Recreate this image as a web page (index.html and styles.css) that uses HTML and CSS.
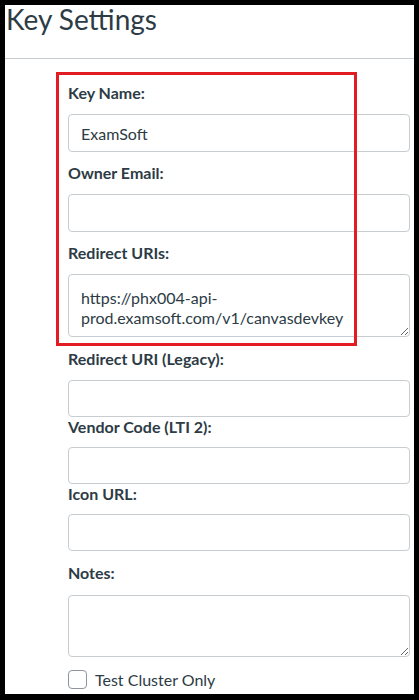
FILE: index.html
```html
<!DOCTYPE html>
<html lang="en">
<head>
<meta charset="utf-8">
<title>Key Settings</title>
<link rel="stylesheet" href="styles.css">
</head>
<body>
<div class="frame">
  <div class="page">
    <header class="page-header">
      <h1 class="page-title">Key Settings</h1>
    </header>
    <form class="key-form">
      <div class="field">
        <label class="field-label" for="key-name">Key Name:</label>
        <input class="text-input" id="key-name" type="text" value="ExamSoft">
      </div>
      <div class="field">
        <label class="field-label" for="owner-email">Owner Email:</label>
        <input class="text-input" id="owner-email" type="text" value="">
      </div>
      <div class="field field--gap12">
        <label class="field-label" for="redirect-uris">Redirect URIs:</label>
        <textarea class="text-area text-area--uris" id="redirect-uris">https://phx004-api-prod.examsoft.com/v1/canvasdevkey</textarea>
      </div>
      <div class="field field--tight">
        <label class="field-label" for="redirect-legacy">Redirect URI (Legacy):</label>
        <input class="text-input text-input--short" id="redirect-legacy" type="text" value="">
      </div>
      <div class="field field--tight">
        <label class="field-label field-label--m10" for="vendor-code">Vendor Code (LTI 2):</label>
        <input class="text-input text-input--short" id="vendor-code" type="text" value="">
      </div>
      <div class="field field--gap12">
        <label class="field-label field-label--m10" for="icon-url">Icon URL:</label>
        <input class="text-input text-input--short" id="icon-url" type="text" value="">
      </div>
      <div class="field field--gap13">
        <label class="field-label field-label--m12" for="notes">Notes:</label>
        <textarea class="text-area text-area--notes" id="notes"></textarea>
      </div>
      <label class="check-row">
        <input class="check-box" type="checkbox">
        <span class="check-text">Test Cluster Only</span>
      </label>
    </form>
  </div>
  <div class="highlight-box"></div>
</div>
</body>
</html>
```

FILE: styles.css
```css
html, body {
  margin: 0;
  padding: 0;
  height: 700px;
  overflow: hidden;
  background: #000;
}

.frame {
  position: relative;
  padding: 5px 5px 6px 5px;
  height: 700px;
  box-sizing: border-box;
}

.page {
  background: #fff;
  height: 689px;
  font-family: Lato, "Open Sans", sans-serif;
  color: #2d3b45;
}

.page-header {
  padding: 0 0 25px 1px;
  border-bottom: 1px solid #c7cdd1;
}

.page-title {
  margin: 0;
  font-size: 28px;
  line-height: 28px;
  font-weight: 400;
  color: #2d3b45;
}

.key-form {
  padding: 24px 4px 0 63px;
}

.field {
  display: flex;
  flex-direction: column;
  margin-bottom: 11px;
}

.field--tight { margin-bottom: 0; }
.field--gap12 { margin-bottom: 12px; }
.field--gap13 { margin-bottom: 13px; }

.field-label {
  display: block;
  font-size: 16px;
  line-height: 20px;
  font-weight: 700;
  margin-bottom: 11px;
  color: #2d3b45;
}

.field-label--m10 { margin-bottom: 10px; }
.field-label--m12 { margin-bottom: 12px; }

.text-input,
.text-area {
  box-sizing: border-box;
  width: 100%;
  border: 1px solid #c7cdd1;
  border-radius: 4px;
  background: #fff;
  font-family: Lato, "Open Sans", sans-serif;
  font-size: 16px;
  color: #2d3b45;
  margin: 0;
  outline: none;
}

.text-input {
  height: 38px;
  padding: 0 12px;
  line-height: 20px;
}

.text-input--short { height: 37px; }

.text-area {
  display: block;
  padding: 13px 12px 8px;
  line-height: 20px;
  resize: vertical;
}

.text-area--uris { height: 63px; }
.text-area--notes { height: 62px; }

.check-row {
  display: flex;
  align-items: center;
  gap: 8px;
  height: 19px;
}

.check-box {
  -webkit-appearance: none;
  appearance: none;
  box-sizing: border-box;
  width: 19px;
  height: 19px;
  margin: 0;
  border: 1px solid #8d959f;
  border-radius: 4px;
  background: #fff;
}

.check-text {
  font-size: 16px;
  line-height: 19px;
  color: #2d3b45;
}

.highlight-box {
  position: absolute;
  left: 56px;
  top: 72px;
  width: 301px;
  height: 274px;
  box-sizing: border-box;
  border: 3px solid #e31b23;
  pointer-events: none;
}
```
